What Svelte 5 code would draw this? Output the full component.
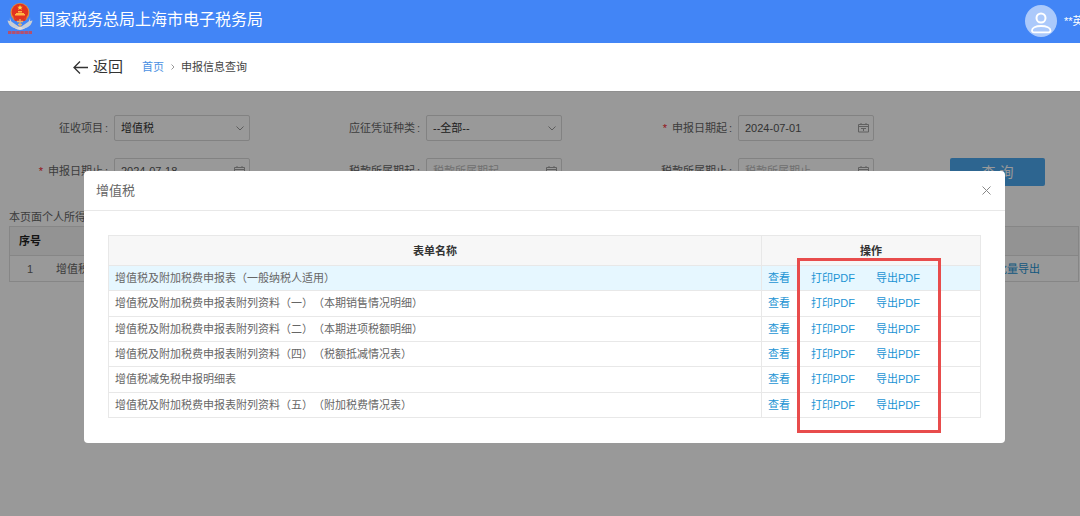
<script lang="ts">
  let taxItem = $state('增值税');
  let voucherType = $state('--全部--');
  let declareFrom = $state('2024-07-01');
  let declareTo = $state('2024-07-18');
  let periodFrom = $state('');
  let periodTo = $state('');
  let open = $state(true);

  const forms = [
    '增值税及附加税费申报表（一般纳税人适用）',
    '增值税及附加税费申报表附列资料（一）（本期销售情况明细）',
    '增值税及附加税费申报表附列资料（二）（本期进项税额明细）',
    '增值税及附加税费申报表附列资料（四）（税额抵减情况表）',
    '增值税减免税申报明细表',
    '增值税及附加税费申报表附列资料（五）（附加税费情况表）'
  ];
</script>

{#snippet chevron()}
  <svg class="icon" viewBox="0 0 10 10" width="10" height="10" aria-hidden="true">
    <path d="M1.500 3.500 5 7l3.500-3.500" fill="none" stroke="#999" stroke-width="1" />
  </svg>
{/snippet}

{#snippet calendar()}
  <svg class="icon" viewBox="0 0 11 10" width="11" height="10" aria-hidden="true">
    <path d="M.5 1.500h10v7.500H.5zM.5 3.500h10M3 0v2M8 0v2M3 5.500h5M5.500 5.500v2.500" fill="none" stroke="#a0a0a0" stroke-width="1" />
  </svg>
{/snippet}

{#snippet dateField(id: string, label: string, required: boolean, value: string, set: (v: string) => void)}
  <div class="field">
    <label for={id}>{#if required}<span class="star">*</span>{/if}{label}<span class="colon">:</span></label>
    <div class="control">
      <input {id} type="text" {value} placeholder={label} oninput={(e) => set(e.currentTarget.value)} />
      {@render calendar()}
    </div>
  </div>
{/snippet}

<div class="page">
  <header class="topbar">
    <svg class="emblem" viewBox="0 0 28 34" width="28" height="34" aria-hidden="true">
      <path d="M4 15c0 5 4 9 10 10v3C7 27 3 22 4 15zM24 15c0 5-4 9-10 10v3c7-1 11-6 10-13z" fill="#e2dcd8" />
      <path d="M1.500 18.500c2 0 4 1 6 2.500l5 3.500-1 2c-6-.5-9-3.500-10-8zM26.500 18.500c-2 0-4 1-6 2.500l-5 3.500 1 2c6-.5 9-3.500 10-8z" fill="#c9ced6" />
      <circle cx="14" cy="10.500" r="9.500" fill="#e58a3b" />
      <circle cx="14" cy="10" r="8.300" fill="#e23320" />
      <path d="m14 3 .8 1.800h1.900l-1.500 1.200.6 1.900-1.800-1.200-1.800 1.200.6-1.900-1.500-1.200h1.900z" fill="#ffd84a" />
      <path d="M10 11h8v1h1v1.500H9V12h1zM12 9h4v1.500h-4z" fill="#ffb545" />
      <path d="M7 15c3 3 11 3 14 0l-2 4H9z" fill="#d93a25" />
      <path d="M14 17v8M11 19.500h6M12 22.500h4" stroke="#e8b06c" stroke-width="1.300" />
      <path d="M2 30.500h24" stroke="#b4506e" stroke-width="3" stroke-dasharray="3.500 .6" />
    </svg>
    <h1>国家税务总局上海市电子税务局</h1>
    <div class="user">
      <svg viewBox="0 0 32 32" width="32" height="32" aria-hidden="true">
        <circle cx="16" cy="16" r="16" fill="#abc9fb" />
        <circle cx="16" cy="13" r="4.500" fill="none" stroke="#fff" stroke-width="2" />
        <path d="M7 25.500c0-2.500 3.500-4.500 9-4.500s9.500 2 9.500 4.500c0 1.200-.8 1.800-2 1.800h-14.500c-1.200 0-2-.6-2-1.800z" fill="none" stroke="#fff" stroke-width="1.800" />
      </svg>
      <span>**英</span>
    </div>
  </header>

  <nav class="crumbs">
    <button class="back" type="button">
      <svg viewBox="0 0 15 13" width="15" height="13" aria-hidden="true">
        <path d="M15 6.500H1M7 .5l-6 6 6 6" fill="none" stroke="#333" stroke-width="1.300" />
      </svg>
      返回
    </button>
    <a href="/">首页</a>
    <svg viewBox="0 0 4 6" width="4" height="6" aria-hidden="true">
      <path d="m.5.5 2.500 2.500-2.500 2.500" fill="none" stroke="#999" />
    </svg>
    <span>申报信息查询</span>
  </nav>

  <main class="content">
    <form class="filters" onsubmit={(e) => e.preventDefault()}>
      <div class="field">
        <label for="tax-item">征收项目<span class="colon">:</span></label>
        <div class="control">
          <select id="tax-item" bind:value={taxItem}>
            <option>增值税</option>
          </select>
          {@render chevron()}
        </div>
      </div>
      <div class="field">
        <label for="voucher-type">应征凭证种类<span class="colon">:</span></label>
        <div class="control">
          <select id="voucher-type" bind:value={voucherType}>
            <option>--全部--</option>
          </select>
          {@render chevron()}
        </div>
      </div>
      {@render dateField('declare-from', '申报日期起', true, declareFrom, (v) => (declareFrom = v))}
      <span></span>
      {@render dateField('declare-to', '申报日期止', true, declareTo, (v) => (declareTo = v))}
      {@render dateField('period-from', '税款所属期起', false, periodFrom, (v) => (periodFrom = v))}
      {@render dateField('period-to', '税款所属期止', false, periodTo, (v) => (periodTo = v))}
      <button class="search" type="submit">查 询</button>
    </form>

    <p class="note">本页面个人所得</p>
    <table class="results">
      <thead>
        <tr><th class="no">序号</th><th></th><th class="ops"></th></tr>
      </thead>
      <tbody>
        <tr>
          <td class="no">1</td>
          <td>增值税</td>
          <td class="ops"><a href="#export">批量导出</a></td>
        </tr>
      </tbody>
    </table>

    {#if open}
      <div class="overlay">
        <div class="dialog" role="dialog" aria-labelledby="dialog-title">
          <div class="dialog-head">
            <h2 id="dialog-title">增值税</h2>
            <button class="close" type="button" aria-label="关闭" onclick={() => (open = false)}>
              <svg viewBox="0 0 9 9" width="9" height="9" aria-hidden="true">
                <path d="m.5.5 8 8M8.500.5l-8 8" stroke="#888" stroke-width="1" />
              </svg>
            </button>
          </div>
          <div class="dialog-body">
            <table class="forms">
              <thead>
                <tr><th>表单名称</th><th class="actions-col">操作</th></tr>
              </thead>
              <tbody>
                {#each forms as name, i}
                  <tr class:active={i === 0}>
                    <td>{name}</td>
                    <td>
                      <div class="actions">
                        <a href="#view">查看</a>
                        <a href="#print">打印PDF</a>
                        <a href="#export">导出PDF</a>
                      </div>
                    </td>
                  </tr>
                {/each}
              </tbody>
            </table>
          </div>
          <div class="highlight"></div>
        </div>
      </div>
    {/if}
  </main>
</div>

<style>
  :global(body) { margin: 0; }

  .page {
    display: flex;
    flex-direction: column;
    min-height: 100vh;
    overflow: hidden;
    background: #fff;
    color: #666;
    font: 11px/16px "Liberation Sans", "Noto Sans CJK SC", sans-serif;
    text-spacing-trim: space-all;
  }
  h1, h2, p { margin: 0; font-weight: 400; }
  a { color: #1c94d4; text-decoration: none; }
  button { border: 0; padding: 0; background: none; font: inherit; cursor: pointer; }
  table { width: 100%; border-collapse: collapse; table-layout: fixed; }

  .topbar { display: flex; align-items: center; height: 43px; padding-left: 6px; background: #4285f6; color: #fff; }
  .emblem { margin-bottom: 6px; }
  h1 { margin: 0 0 3px 5px; font-size: 16px; line-height: 24px; }
  .user { display: flex; align-items: center; gap: 7px; width: 55px; margin: 0 0 1px auto; white-space: nowrap; }
  .user svg { flex: none; }

  .crumbs { display: flex; align-items: center; height: 48px; padding-left: 73px; color: #444; }
  .crumbs a { margin-right: 7px; color: #4a90e2; }
  .crumbs span { margin-left: 6px; }
  .back { display: flex; align-items: center; gap: 5px; margin-right: 19px; font-size: 15px; line-height: 22px; color: #333; }

  .content { position: relative; flex: 1; border-top: 1px solid #eee; }
  .filters { display: grid; grid-template-columns: 250fr 312fr 312fr 206fr; row-gap: 17px; padding-top: 23px; align-items: start; }
  .field { display: flex; align-items: center; justify-content: flex-end; gap: 6px; }
  .field label { white-space: nowrap; }
  .star { margin-right: 5px; color: #f5222d; }
  .colon { margin-left: 2px; }
  .control { position: relative; width: 136px; }
  .control select, .control input {
    display: block;
    box-sizing: border-box;
    width: 100%;
    height: 26px;
    padding: 0 24px 0 6px;
    border: 1px solid #d9d9d9;
    border-radius: 2px;
    background: #fff;
    color: #333;
    font: inherit;
    appearance: none;
  }
  .control input { color: #555; }
  .control input::placeholder { color: #bbb; }
  .icon { position: absolute; right: 5px; top: 8px; pointer-events: none; }
  .search { width: 95px; height: 28px; margin-left: 76px; border-radius: 2px; background: #4ca9f0; color: #fff; font-size: 14px; }

  .note { margin: 22px 0 0 9px; line-height: 18px; }
  .results { width: auto; min-width: calc(100% - 10px); margin-left: 9px; border: 1px solid #e0e0e0; }
  .results th { height: 28px; padding: 0; background: #f5f5f5; color: #222; }
  .results td { height: 25px; padding: 0 6px; border-top: 1px solid #e0e0e0; }
  .results .no { width: 40px; padding: 0; text-align: center; }
  .results .ops { width: 76px; }

  .overlay { position: absolute; inset: -1px 0 0; padding: 80px 75px 0 84px; background: rgba(0, 0, 0, 0.4); }
  .dialog { position: relative; border-radius: 4px; background: #fff; }
  .dialog-head { display: flex; align-items: center; justify-content: space-between; height: 39px; padding: 0 14px 0 12px; border-bottom: 1px solid #e8e8e8; }
  h2 { font-size: 13px; line-height: 20px; }
  .close { display: flex; padding: 0; }
  .dialog-body { padding: 24px 24px 25px; }

  .forms { height: 183px; border: 1px solid #e8e8e8; }
  .forms th { height: 29px; padding: 0; border: 1px solid #e8e8e8; background: #f7f7f7; color: #333; }
  .forms td { padding: 0 7px 0 6px; border: 1px solid #e8e8e8; }
  .forms .actions-col { width: 218px; }
  .forms .active td { background: #e6f7ff; }
  .actions { display: flex; gap: 21px; white-space: nowrap; }

  .highlight { position: absolute; top: 87px; right: 64px; bottom: 10px; width: 138px; border: 3px solid #e84c4c; pointer-events: none; }
</style>
